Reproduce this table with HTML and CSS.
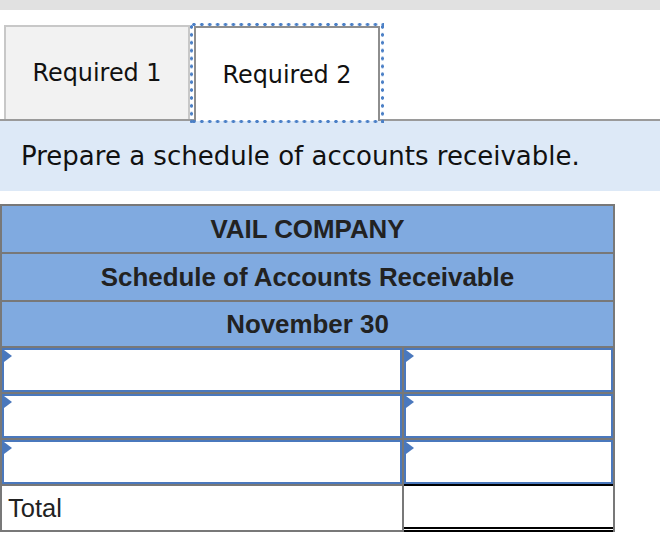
FILE: index.html
```html
<!DOCTYPE html>
<html>
<head>
<meta charset="utf-8">
<link rel="stylesheet" href="styles.css">
</head>
<body>
<div class="topbar"></div>
<div class="tabs">
  <div class="tab tab-inactive">Required 1</div>
  <div class="tab tab-active">Required 2</div>
</div>
<div class="prompt">Prepare a schedule of accounts receivable.</div>
<div class="sheet">
  <div class="head h1">VAIL COMPANY</div>
  <div class="head h2">Schedule of Accounts Receivable</div>
  <div class="head h3">November 30</div>
  <div class="inp"><span class="tri"></span></div>
  <div class="inp"><span class="tri"></span></div>
  <div class="inp"><span class="tri"></span></div>
  <div class="inp"><span class="tri"></span></div>
  <div class="inp"><span class="tri"></span></div>
  <div class="inp"><span class="tri"></span></div>
  <div class="total-label">Total</div>
  <div class="total-val"></div>
</div>
</body>
</html>
```
FILE: styles.css
```css
html, body {
  margin: 0;
  padding: 0;
  background: #ffffff;
}
body {
  width: 660px;
  height: 544px;
  overflow: hidden;
}
.topbar {
  height: 10px;
  background: #e1e1e1;
}
.tabs {
  display: flex;
  align-items: flex-end;
  gap: 4px;
  padding: 15px 0 0 4px;
  border-bottom: 2px solid #9a9a9a;
  height: 94px;
}
.tab {
  box-sizing: border-box;
  width: 186px;
  height: 94px;
  display: flex;
  align-items: center;
  justify-content: center;
  font-family: "DejaVu Sans", Verdana, sans-serif;
  font-size: 23.9px;
  color: #111;
}
.tab-inactive {
  background: #f2f2f2;
  border: 2px solid #c8c8c8;
  border-bottom: none;
}
.tab-active {
  position: relative;
  background: #fff;
  border: 2px solid #8e8e8e;
  border-bottom: none;
  height: 95px;
  margin-bottom: -2px;
}
.tab-active::before {
  content: "";
  position: absolute;
  top: -5px;
  left: -6px;
  right: -6px;
  bottom: -2px;
  background:
    radial-gradient(circle at center, #4a7fc6 1.4px, rgba(74,127,198,0) 2px) 0 0 / 7.9px 3px repeat-x,
    radial-gradient(circle at center, #4a7fc6 1.4px, rgba(74,127,198,0) 2px) 0 100% / 7.9px 3px repeat-x,
    radial-gradient(circle at center, #4a7fc6 1.4px, rgba(74,127,198,0) 2px) 0 0 / 3px 7.9px repeat-y,
    radial-gradient(circle at center, #4a7fc6 1.4px, rgba(74,127,198,0) 2px) 100% 0 / 3px 7.9px repeat-y;
}
.prompt {
  height: 70px;
  background: #dde9f7;
  display: flex;
  align-items: center;
  padding-left: 21px;
  font-family: "DejaVu Sans", Verdana, sans-serif;
  font-size: 26px;
  color: #111;
}
.sheet {
  margin-top: 13px;
  width: 611px;
  display: grid;
  grid-template-columns: 400px 209px;
  gap: 2px;
  padding: 2px;
  background: #787878;
}
.head {
  grid-column: 1 / span 2;
  background: #80aae0;
  display: flex;
  align-items: center;
  justify-content: center;
  font-family: "Liberation Sans", Arial, sans-serif;
  font-weight: bold;
  font-size: 25.9px;
  color: #222;
}
.h1 { height: 46px; }
.h2 { height: 46px; }
.h3 { height: 44px; }
.inp {
  box-sizing: border-box;
  height: 44px;
  background: #fff;
  border: 2px solid #4a78bd;
}
.tri {
  display: block;
  width: 0;
  height: 0;
  border-top: 6px solid transparent;
  border-bottom: 6px solid transparent;
  border-left: 8px solid #4a78bd;
}
.total-label {
  height: 44px;
  background: #fff;
  display: flex;
  align-items: center;
  padding-left: 6px;
  font-family: "Liberation Sans", Arial, sans-serif;
  font-size: 25.5px;
  color: #222;
}
.total-val {
  box-sizing: border-box;
  height: 48px;
  margin-top: -2px;
  margin-bottom: -2px;
  background: #fff;
  border-top: 2px solid #000;
  border-bottom: 5px double #000;
}
```
